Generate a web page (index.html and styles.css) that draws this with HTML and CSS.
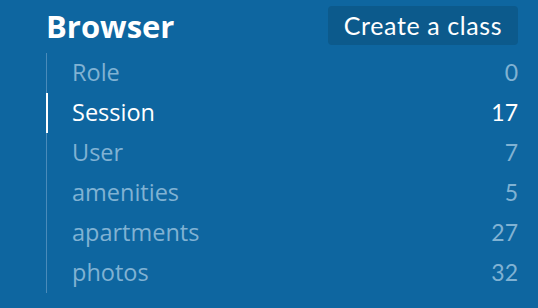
FILE: index.html
```html
<!DOCTYPE html>
<html lang="en">
<head>
    <meta charset="UTF-8">
    <title>Browser</title>
    <link rel="stylesheet" href="styles.css">
</head>
<body>
    <section class="browser">
        <header class="browser-head">
            <h1 class="browser-title">Browser</h1>
            <a href="#" class="create-btn">Create a class</a>
        </header>
        <ul class="class-list">
            <li class="class-item"><span>Role</span><span class="count">0</span></li>
            <li class="class-item active"><span>Session</span><span class="count">17</span></li>
            <li class="class-item"><span>User</span><span class="count">7</span></li>
            <li class="class-item"><span>amenities</span><span class="count">5</span></li>
            <li class="class-item"><span>apartments</span><span class="count">27</span></li>
            <li class="class-item"><span>photos</span><span class="count">32</span></li>
        </ul>
    </section>
</body>
</html>
```

FILE: styles.css
```css
body {
    margin: 0;
    padding: 0;
    background-color: #0e66a0;
    font-family: 'Open Sans', sans-serif;
    color: white;
}
.browser {
    padding: 6px 20px 0 46px;
}
.browser-head {
    display: flex;
    justify-content: space-between;
    align-items: center;
    height: 39px;
}
.browser-title {
    margin: 0;
    font-size: 31px;
    font-weight: bold;
    line-height: 36px;
}
.create-btn {
    display: block;
    width: 190px;
    height: 39px;
    line-height: 39px;
    text-align: center;
    background-color: #0c5a8c;
    color: white;
    border-radius: 4px;
    text-decoration: none;
    font-family: 'Lato', sans-serif;
    font-size: 25px;
    letter-spacing: 0.6px;
}
.class-list {
    list-style: none;
    margin: 8px 0 0 0;
    padding: 0;
    border-left: 1px solid #4a8bba;
}
.class-item {
    display: flex;
    justify-content: space-between;
    align-items: center;
    height: 40px;
    box-sizing: border-box;
    padding: 0 0 3px 25px;
    font-size: 23.5px;
    line-height: 30px;
    color: #80b2d3;
}
.class-item.active {
    color: white;
    border-left: 2px solid white;
    margin-left: -1px;
    padding-left: 24px;
}
.count {
    font-family: 'Lato', sans-serif;
    font-size: 23px;
}
```
